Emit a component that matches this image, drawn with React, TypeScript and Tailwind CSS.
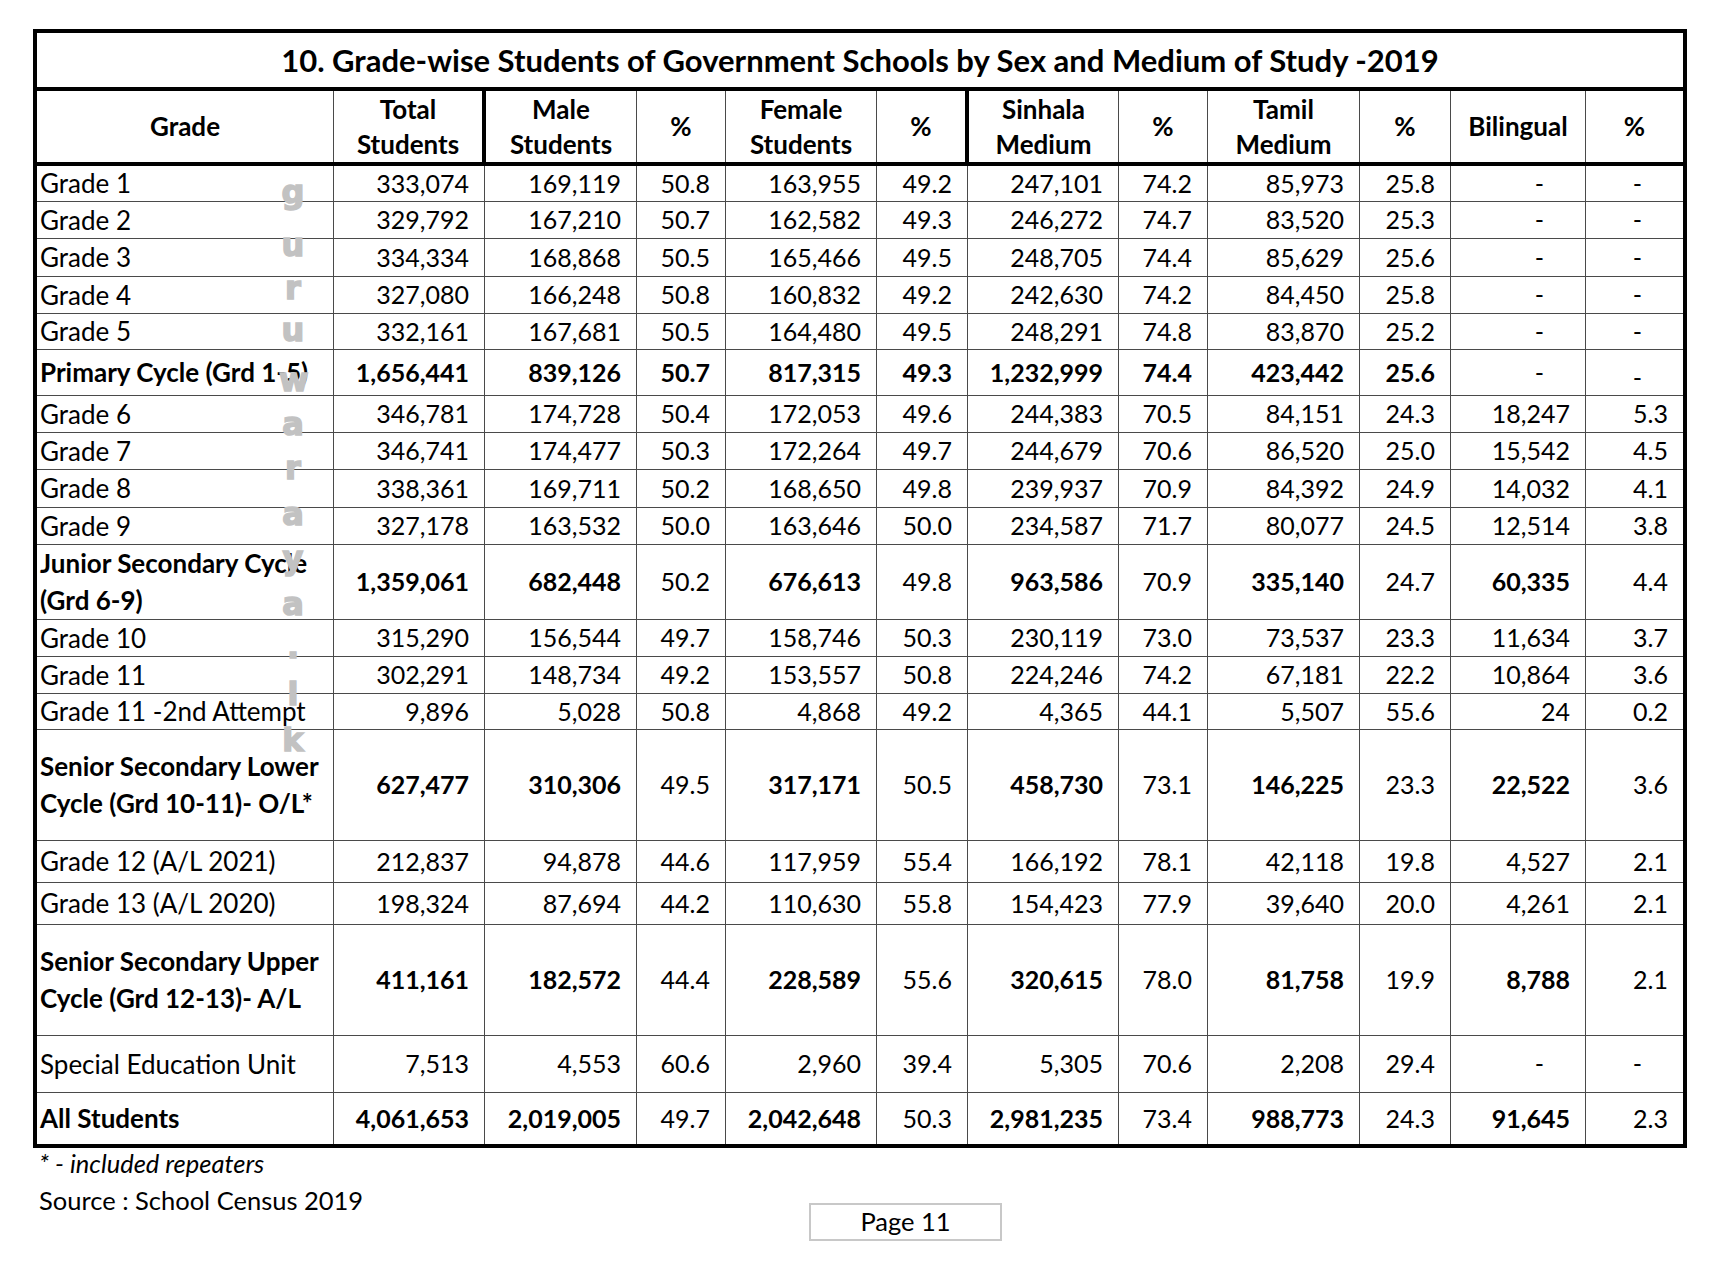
import React from "react";

type Row = {
  label: string[];
  vals: string[];
  h: string;
  boldLabel?: boolean;
  boldCounts?: boolean;
  boldPct?: boolean;
  last?: boolean;
  dashLow?: boolean;
};

const rows: Row[] = [
  { label: ["Grade 1"], h: "h-[36px]", vals: ["333,074", "169,119", "50.8", "163,955", "49.2", "247,101", "74.2", "85,973", "25.8", "-", "-"] },
  { label: ["Grade 2"], h: "h-[37px]", vals: ["329,792", "167,210", "50.7", "162,582", "49.3", "246,272", "74.7", "83,520", "25.3", "-", "-"] },
  { label: ["Grade 3"], h: "h-[38px]", vals: ["334,334", "168,868", "50.5", "165,466", "49.5", "248,705", "74.4", "85,629", "25.6", "-", "-"] },
  { label: ["Grade 4"], h: "h-[37px]", vals: ["327,080", "166,248", "50.8", "160,832", "49.2", "242,630", "74.2", "84,450", "25.8", "-", "-"] },
  { label: ["Grade 5"], h: "h-[36px]", vals: ["332,161", "167,681", "50.5", "164,480", "49.5", "248,291", "74.8", "83,870", "25.2", "-", "-"] },
  { label: ["Primary Cycle (Grd 1-5)"], h: "h-[46px]", boldLabel: true, boldCounts: true, boldPct: true, dashLow: true, vals: ["1,656,441", "839,126", "50.7", "817,315", "49.3", "1,232,999", "74.4", "423,442", "25.6", "-", "-"] },
  { label: ["Grade 6"], h: "h-[37px]", vals: ["346,781", "174,728", "50.4", "172,053", "49.6", "244,383", "70.5", "84,151", "24.3", "18,247", "5.3"] },
  { label: ["Grade 7"], h: "h-[37px]", vals: ["346,741", "174,477", "50.3", "172,264", "49.7", "244,679", "70.6", "86,520", "25.0", "15,542", "4.5"] },
  { label: ["Grade 8"], h: "h-[38px]", vals: ["338,361", "169,711", "50.2", "168,650", "49.8", "239,937", "70.9", "84,392", "24.9", "14,032", "4.1"] },
  { label: ["Grade 9"], h: "h-[37px]", vals: ["327,178", "163,532", "50.0", "163,646", "50.0", "234,587", "71.7", "80,077", "24.5", "12,514", "3.8"] },
  { label: ["Junior Secondary Cycle", "(Grd 6-9)"], h: "h-[75px]", boldLabel: true, boldCounts: true, vals: ["1,359,061", "682,448", "50.2", "676,613", "49.8", "963,586", "70.9", "335,140", "24.7", "60,335", "4.4"] },
  { label: ["Grade 10"], h: "h-[37px]", vals: ["315,290", "156,544", "49.7", "158,746", "50.3", "230,119", "73.0", "73,537", "23.3", "11,634", "3.7"] },
  { label: ["Grade 11"], h: "h-[37px]", vals: ["302,291", "148,734", "49.2", "153,557", "50.8", "224,246", "74.2", "67,181", "22.2", "10,864", "3.6"] },
  { label: ["Grade 11 -2nd Attempt"], h: "h-[36px]", vals: ["9,896", "5,028", "50.8", "4,868", "49.2", "4,365", "44.1", "5,507", "55.6", "24", "0.2"] },
  { label: ["Senior Secondary Lower", "Cycle (Grd 10-11)- O/L*"], h: "h-[111px]", boldLabel: true, boldCounts: true, vals: ["627,477", "310,306", "49.5", "317,171", "50.5", "458,730", "73.1", "146,225", "23.3", "22,522", "3.6"] },
  { label: ["Grade 12 (A/L 2021)"], h: "h-[42px]", vals: ["212,837", "94,878", "44.6", "117,959", "55.4", "166,192", "78.1", "42,118", "19.8", "4,527", "2.1"] },
  { label: ["Grade 13 (A/L 2020)"], h: "h-[42px]", vals: ["198,324", "87,694", "44.2", "110,630", "55.8", "154,423", "77.9", "39,640", "20.0", "4,261", "2.1"] },
  { label: ["Senior Secondary Upper", "Cycle (Grd 12-13)- A/L"], h: "h-[111px]", boldLabel: true, boldCounts: true, vals: ["411,161", "182,572", "44.4", "228,589", "55.6", "320,615", "78.0", "81,758", "19.9", "8,788", "2.1"] },
  { label: ["Special Education Unit"], h: "h-[57px]", vals: ["7,513", "4,553", "60.6", "2,960", "39.4", "5,305", "70.6", "2,208", "29.4", "-", "-"] },
  { label: ["All Students"], h: "h-[51px]", boldLabel: true, boldCounts: true, last: true, vals: ["4,061,653", "2,019,005", "49.7", "2,042,648", "50.3", "2,981,235", "73.4", "988,773", "24.3", "91,645", "2.3"] },
];

const bodyW = [
  "w-[151px]",
  "w-[152px]",
  "w-[89px]",
  "w-[151px]",
  "w-[91px]",
  "w-[151px]",
  "w-[89px]",
  "w-[152px]",
  "w-[91px]",
  "w-[135px]",
  "w-[97px]",
];

const watermark: [string, string][] = [
  ["g", "top-[176px]"],
  ["u", "top-[229px]"],
  ["r", "top-[272px]"],
  ["u", "top-[314px]"],
  ["w", "top-[364px]"],
  ["a", "top-[408px]"],
  ["r", "top-[452px]"],
  ["a", "top-[498px]"],
  ["y", "top-[542px]"],
  ["a", "top-[588px]"],
  [".", "top-[631px]"],
  ["l", "top-[678px]"],
  ["k", "top-[724px]"],
];

function HeaderCell({ w, lines, thick, last }: { w: string; lines: string[]; thick?: boolean; last?: boolean }) {
  const border = last ? "" : thick ? "border-r-4 border-black" : "border-r border-[#4a4a4a]";
  return (
    <div className={`${w} h-full flex flex-col items-center justify-center font-bold leading-[35px] ${border}`}>
      {lines.map((l, i) => (
        <span key={i}>{l}</span>
      ))}
    </div>
  );
}

export default function App() {
  return (
    <div
      className="relative w-[1725px] h-[1261px] bg-white text-black pt-[29px] pl-[33px]"
      style={{ fontFamily: "Lato, 'Open Sans', sans-serif" }}
    >
      <div className="w-[1654px] border-4 border-black text-[26px]">
        <div className="h-[58px] border-b-4 border-black flex items-center justify-center font-bold text-[31px]">
          10. Grade-wise Students of Government Schools by Sex and Medium of Study -2019
        </div>
        <div className="h-[75px] border-b-4 border-black flex">
          <HeaderCell w="w-[297px]" lines={["Grade"]} />
          <HeaderCell w="w-[152px]" lines={["Total", "Students"]} thick />
          <HeaderCell w="w-[151px]" lines={["Male", "Students"]} />
          <HeaderCell w="w-[89px]" lines={["%"]} />
          <HeaderCell w="w-[151px]" lines={["Female", "Students"]} />
          <HeaderCell w="w-[92px]" lines={["%"]} thick />
          <HeaderCell w="w-[150px]" lines={["Sinhala", "Medium"]} />
          <HeaderCell w="w-[89px]" lines={["%"]} />
          <HeaderCell w="w-[152px]" lines={["Tamil", "Medium"]} />
          <HeaderCell w="w-[91px]" lines={["%"]} />
          <HeaderCell w="w-[135px]" lines={["Bilingual"]} />
          <HeaderCell w="w-[97px]" lines={["%"]} last />
        </div>
        {rows.map((r, ri) => (
          <div key={ri} className={`${r.h} flex ${r.last ? "" : "border-b border-[#4a4a4a]"}`}>
            <div
              className={`w-[297px] h-full flex flex-col justify-center pl-[3px] leading-[37px] border-r border-[#4a4a4a] ${
                r.boldLabel ? "font-bold" : ""
              }`}
            >
              {r.label.map((l, i) => (
                <span key={i} className="whitespace-nowrap">
                  {l}
                </span>
              ))}
            </div>
            {r.vals.map((v, ci) => {
              const isPct = ci >= 2 && ci % 2 === 0;
              const dash = v === "-";
              const bold = !dash && (isPct ? !!r.boldPct : !!r.boldCounts);
              const lastCol = ci === 10;
              return (
                <div
                  key={ci}
                  className={`${bodyW[ci]} h-full flex items-center justify-end text-[25px] ${
                    dash ? "pr-[41px]" : "pr-[15px]"
                  } ${lastCol ? "" : "border-r border-[#4a4a4a]"} ${bold ? "font-bold" : ""} ${
                    dash && r.dashLow && lastCol ? "pt-[10px]" : ""
                  }`}
                >
                  {v}
                </div>
              );
            })}
          </div>
        ))}
      </div>
      <div className="pl-[6px] text-[25.5px]">
        <div className="italic leading-[30px]">* - included repeaters</div>
        <div className="flex items-start mt-[7px]">
          <div className="w-[770px] leading-[30px]">Source : School Census 2019</div>
          <div className="mt-[18px] w-[193px] h-[38px] border-2 border-[#c8c8c8] flex items-center justify-center leading-none">
            Page 11
          </div>
        </div>
      </div>
      {watermark.map(([ch, top], i) => (
        <span
          key={i}
          className={`absolute left-[279px] ${top} w-[28px] text-center text-[32px] leading-[32px] font-bold text-[#c2c2c2] [-webkit-text-stroke:1.5px_#c2c2c2] pointer-events-none`}
          style={{ fontFamily: "'DejaVu Sans', Verdana, sans-serif" }}
        >
          {ch}
        </span>
      ))}
    </div>
  );
}
